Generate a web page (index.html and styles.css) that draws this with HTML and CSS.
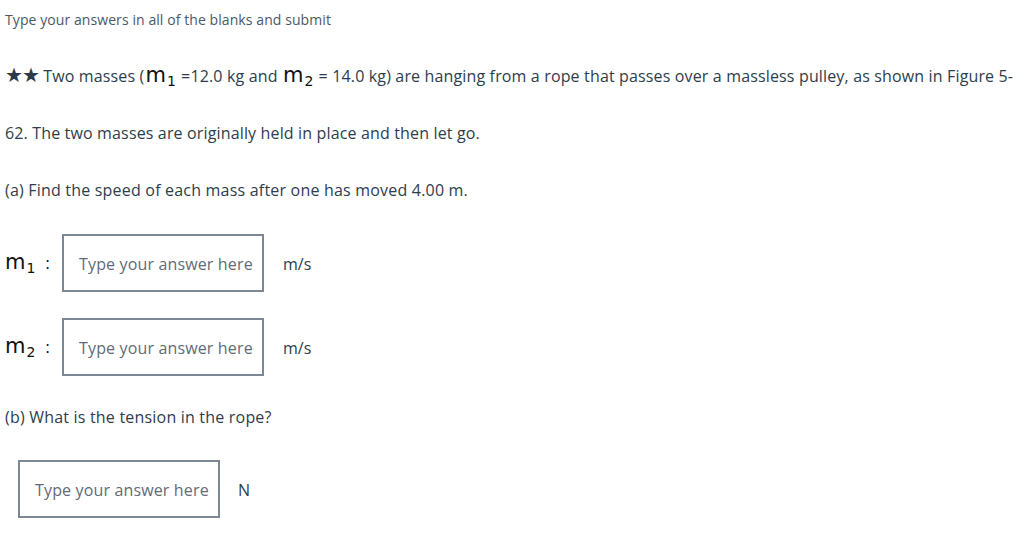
FILE: index.html
```html
<!DOCTYPE html>
<html>
<head>
<meta charset="utf-8">
<link rel="stylesheet" href="styles.css">
</head>
<body>
<div class="page">
  <div class="instructions">Type your answers in all of the blanks and submit</div>
  <p class="question"><span class="stars">★★</span> Two masses (<span class="math">m<sub>1</sub></span> =12.0 kg and <span class="math">m<sub>2</sub></span> <span class="seg">= 14.0 kg) are hanging from a rope that passes over a massless pulley, as shown in Figure 5-</span><span class="seg">62. The two masses are originally held in place and then let go.</span></p>
  <p class="part">(a) Find the speed of each mass after one has moved 4.00 m.</p>
  <div class="row">
    <span class="label"><span class="math">m<sub>1</sub></span> :</span>
    <div class="box">Type your answer here</div>
    <span class="unit">m/s</span>
  </div>
  <div class="row">
    <span class="label"><span class="math">m<sub>2</sub></span> :</span>
    <div class="box">Type your answer here</div>
    <span class="unit">m/s</span>
  </div>
  <p class="part part-b">(b) What is the tension in the rope?</p>
  <div class="row row-b">
    <div class="box">Type your answer here</div>
    <span class="unit">N</span>
  </div>
</div>
</body>
</html>
```
FILE: styles.css
```css
html, body {
  margin: 0;
  padding: 0;
  background: #ffffff;
}
body {
  font-family: "Open Sans", "Noto Sans", sans-serif;
  color: #2e3d4c;
}
.page {
  padding: 10px 5px 0 5px;
  width: 1020px;
}
.instructions {
  font-size: 14px;
  line-height: 20px;
  color: #4b5867;
  letter-spacing: 0.08px;
}
.question {
  margin: 17px 0 0 0;
  font-size: 16px;
  line-height: 57px;
  letter-spacing: 0.15px;
}
.stars {
  font-family: "DejaVu Sans", sans-serif;
  font-size: 20px;
  letter-spacing: -1px;
  color: #2b3a48;
}
.math {
  display: inline-block;
  font-family: "DejaVu Sans", sans-serif;
  font-size: 21px;
  line-height: 1;
  color: #111;
  letter-spacing: 0;
  margin: 0 1px;
}
.math sub {
  font-size: 14px;
  vertical-align: -4px;
  line-height: 1;
  margin-left: 1px;
}
.part {
  margin: 0;
  font-size: 16px;
  line-height: 57px;
  letter-spacing: 0.2px;
}
.row {
  display: flex;
  align-items: center;
  margin-top: 15px;
}
.row + .row {
  margin-top: 26px;
}
.label {
  width: 57px;
  font-size: 16px;
  color: #000;
}
.label .math {
  margin: 0 6px 0 0;
}
.box {
  box-sizing: border-box;
  width: 202px;
  height: 58px;
  border: 2px solid #7b8794;
  padding-left: 15px;
  padding-top: 2px;
  display: flex;
  align-items: center;
  font-size: 16px;
  letter-spacing: 0.15px;
  color: #5f6b78;
  white-space: nowrap;
}
.unit {
  margin-left: 19px;
  padding-top: 2px;
  font-size: 16px;
  color: #2e3d4c;
}
.part-b {
  margin-top: 13px;
}
.row-b {
  margin-top: 14px;
  padding-left: 13px;
}
.row-b .unit {
  margin-left: 18px;
}
```
